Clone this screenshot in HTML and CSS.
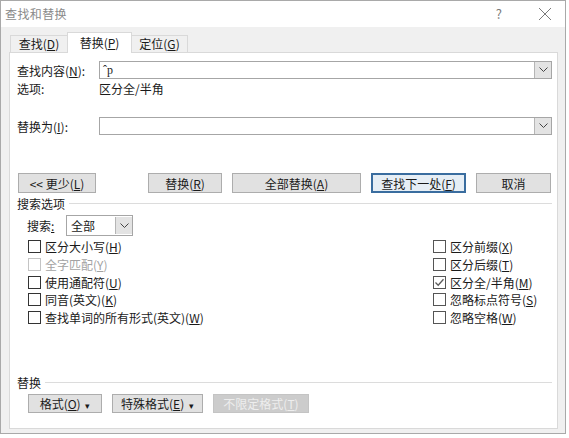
FILE: index.html
```html
<!DOCTYPE html>
<html lang="zh-CN">
<head>
    <meta charset="UTF-8">
    <title>查找和替换</title>
    <link rel="stylesheet" href="styles.css">
</head>
<body>
    <div class="window">
        <div class="titlebar">
            <span class="title">查找和替换</span>
            <span class="help">?</span>
            <svg class="close" width="14" height="14" viewBox="0 0 14 14">
                <path d="M1 1 L13 13 M13 1 L1 13" stroke="#7a7a7a" stroke-width="1" fill="none"/>
            </svg>
        </div>

        <div class="client">
            <div class="tabs">
                <div class="tab tab-find">查找(<u>D</u>)</div>
                <div class="tab tab-replace active">替换(<u>P</u>)</div>
                <div class="tab tab-goto">定位(<u>G</u>)</div>
            </div>

            <div class="panel">
                <div class="field">
                    <span class="label">查找内容(<u>N</u>):</span>
                    <div class="combo">
                        <span class="value">ˆp</span>
                        <span class="drop">
                            <svg width="9" height="6" viewBox="0 0 9 6"><path d="M0.5 0.5 L4.5 4.5 L8.5 0.5" stroke="#444" fill="none"/></svg>
                        </span>
                    </div>
                </div>
                <div class="field options">
                    <span class="label">选项:</span>
                    <span>区分全/半角</span>
                </div>
                <div class="field replace">
                    <span class="label">替换为(<u>I</u>):</span>
                    <div class="combo">
                        <span class="value"></span>
                        <span class="drop">
                            <svg width="9" height="6" viewBox="0 0 9 6"><path d="M0.5 0.5 L4.5 4.5 L8.5 0.5" stroke="#444" fill="none"/></svg>
                        </span>
                    </div>
                </div>

                <div class="actions">
                    <button class="btn btn-less">&lt;&lt; 更少(<u>L</u>)</button>
                    <div class="action-group">
                        <button class="btn btn-replace">替换(<u>R</u>)</button>
                        <button class="btn btn-all">全部替换(<u>A</u>)</button>
                        <button class="btn btn-next focused">查找下一处(<u>F</u>)</button>
                        <button class="btn btn-cancel">取消</button>
                    </div>
                </div>

                <div class="group-title">搜索选项</div>

                <div class="search-row">
                    <span class="search-label">搜索<u>:</u></span>
                    <div class="select">
                        <span class="value">全部</span>
                        <span class="drop">
                            <svg width="9" height="6" viewBox="0 0 9 6"><path d="M0.5 0.5 L4.5 4.5 L8.5 0.5" stroke="#444" fill="none"/></svg>
                        </span>
                    </div>
                </div>

                <div class="checks">
                    <div class="check-col">
                        <div class="check"><span class="box"></span><span>区分大小写(<u>H</u>)</span></div>
                        <div class="check disabled"><span class="box"></span><span>全字匹配(<u>Y</u>)</span></div>
                        <div class="check"><span class="box"></span><span>使用通配符(<u>U</u>)</span></div>
                        <div class="check"><span class="box"></span><span>同音(英文)(<u>K</u>)</span></div>
                        <div class="check"><span class="box"></span><span>查找单词的所有形式(英文)(<u>W</u>)</span></div>
                    </div>
                    <div class="check-col">
                        <div class="check"><span class="box"></span><span>区分前缀(<u>X</u>)</span></div>
                        <div class="check"><span class="box"></span><span>区分后缀(<u>T</u>)</span></div>
                        <div class="check"><span class="box checked"><svg width="11" height="11" viewBox="0 0 11 11"><path d="M1.5 5.5 L4.2 8.2 L9.5 2.2" stroke="#5a5a5a" stroke-width="1.3" fill="none"/></svg></span><span>区分全/半角(<u>M</u>)</span></div>
                        <div class="check"><span class="box"></span><span>忽略标点符号(<u>S</u>)</span></div>
                        <div class="check"><span class="box"></span><span>忽略空格(<u>W</u>)</span></div>
                    </div>
                </div>

                <div class="group-title group-replace">替换</div>

                <div class="format-row">
                    <button class="btn btn-format">格式(<u>O</u>) <span class="caret">▾</span></button>
                    <button class="btn btn-special">特殊格式(<u>E</u>) <span class="caret">▾</span></button>
                    <button class="btn btn-noformat" disabled>不限定格式(<u>T</u>)</button>
                </div>
            </div>
        </div>
    </div>
</body>
</html>
```

FILE: styles.css
```css
* {
    box-sizing: border-box;
}

body {
    margin: 0;
    background: #ffffff;
    font-family: "Noto Sans CJK SC", "Liberation Sans", sans-serif;
    font-size: 12px;
    color: #1a1a1a;
}

u {
    text-underline-offset: 1px;
}

.window {
    width: 566px;
    height: 434px;
    border: 1px solid #a9a9a9;
    display: flex;
    flex-direction: column;
    background: #f0f0f0;
}

.titlebar {
    height: 26px;
    background: #ffffff;
    display: flex;
    align-items: center;
    padding: 0 13px 2px 4px;
}

.title {
    color: #8a8a8a;
    letter-spacing: 0.4px;
}

.help {
    margin-left: auto;
    margin-right: 36px;
    color: #7a7a7a;
    font-size: 13px;
}

.close {
    margin-top: 2px;
}

.client {
    flex: 1;
    padding: 5px 7px 4px 8px;
}

.tabs {
    height: 20px;
    display: flex;
    align-items: flex-end;
    padding-left: 1px;
}

.tab {
    height: 17px;
    line-height: 15px;
    border: 1px solid #d9d9d9;
    border-bottom: none;
    background: #f0f0f0;
    text-align: center;
}

.tab-find {
    width: 58px;
}

.tab-replace {
    width: 65px;
    margin-left: -1px;
}

.tab-goto {
    width: 57px;
    margin-left: -1px;
}

.tab.active {
    height: 21px;
    margin-bottom: -1px;
    padding-top: 2px;
    background: #ffffff;
    position: relative;
    z-index: 1;
}

.panel {
    height: 377px;
    border: 1px solid #d9d9d9;
    background: #ffffff;
    padding: 8px 5px 0 7px;
}

.field {
    display: flex;
    align-items: center;
    height: 18px;
}

.field .label {
    width: 82px;
}

.options {
    height: 16px;
    margin-top: 1px;
}

.replace {
    margin-top: 21px;
}

.combo {
    flex: 1;
    height: 18px;
    border: 1px solid #a6a6a6;
    display: flex;
    align-items: center;
    padding-left: 3px;
}

.combo .value {
    font-family: "Liberation Serif", serif;
    font-size: 12px;
}

.drop {
    margin-left: auto;
    width: 17px;
    height: 16px;
    background: #e3e3e3;
    border-left: 1px solid #b5b5b5;
    display: flex;
    align-items: center;
    justify-content: center;
}

.actions {
    margin-top: 38px;
    display: flex;
    height: 20px;
    padding-right: 1px;
}

.action-group {
    margin-left: auto;
    display: flex;
    gap: 10px;
}

.btn {
    height: 20px;
    padding: 0;
    font-family: inherit;
    font-size: 12px;
    color: #1a1a1a;
    background: #e1e1e1;
    border: 1px solid #adadad;
}

.btn-less {
    width: 78px;
    margin-left: 1px;
}

.btn-replace {
    width: 74px;
}

.btn-all {
    width: 129px;
}

.btn-next {
    width: 95px;
}

.btn-cancel {
    width: 75px;
}

.btn.focused {
    border: 2px solid #3a6d9f;
    background: #e6eef5;
}

.group-title {
    margin-top: 3px;
    height: 14px;
    display: flex;
    align-items: center;
    gap: 4px;
}

.group-title::after {
    content: "";
    flex: 1;
    border-top: 1px solid #dcdcdc;
}

.search-row {
    margin-top: 5px;
    display: flex;
    align-items: center;
    padding-left: 10px;
}

.search-label {
    width: 39px;
}

.select {
    width: 67px;
    height: 21px;
    border: 1px solid #a6a6a6;
    display: flex;
    align-items: center;
    padding: 1px 0 1px 4px;
}

.select .drop {
    height: 17px;
}

.checks {
    margin-top: 2px;
    display: flex;
    padding-left: 11px;
}

.check-col {
    display: flex;
    flex-direction: column;
}

.check-col:first-child {
    width: 405px;
}

.check {
    height: 17.7px;
    display: flex;
    align-items: center;
    gap: 4px;
}

.box {
    width: 13px;
    height: 13px;
    border: 1px solid #333333;
    background: #ffffff;
    display: flex;
    align-items: center;
    justify-content: center;
}

.check-col:last-child .box {
    border-color: #555555;
}

.check.disabled {
    color: #a3a3a3;
}

.check.disabled .box {
    border-color: #c4c4c4;
}

.group-replace {
    margin-top: 49px;
}

.format-row {
    margin-top: 5px;
    display: flex;
    gap: 10px;
    padding-left: 11px;
}

.format-row .btn {
    height: 19px;
}

.btn-format {
    width: 74px;
}

.btn-special {
    width: 91px;
}

.btn-noformat {
    width: 96px;
}

.btn:disabled {
    background: #cccccc;
    border-color: #c4c4c4;
    color: #eeeeee;
}

.caret {
    font-size: 9px;
    margin-left: 2px;
}
```
